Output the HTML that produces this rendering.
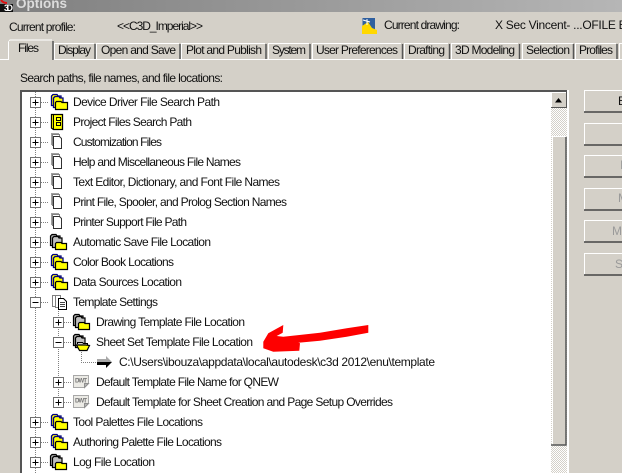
<!DOCTYPE html>
<html>
<head>
<meta charset="utf-8">
<title>Options</title>
<style>
html,body{margin:0;padding:0;width:622px;height:473px;overflow:hidden;background:#d4d0c8}
svg{display:block}
text{font-family:"Liberation Sans",sans-serif;font-size:12px;fill:#111}
</style>
</head>
<body>
<svg xmlns="http://www.w3.org/2000/svg" width="622" height="473" viewBox="0 0 622 473">
<defs>
<linearGradient id="tb" x1="0" x2="1" y1="0" y2="0">
<stop offset="0" stop-color="#7f7f7f"/><stop offset=".5" stop-color="#9a9a9a"/><stop offset="1" stop-color="#b6b6b6"/>
</linearGradient>
<pattern id="hatch" width="2" height="2" patternUnits="userSpaceOnUse">
<rect width="2" height="2" fill="#ffffff"/><rect width="1" height="1" fill="#d4d0c8"/><rect x="1" y="1" width="1" height="1" fill="#d4d0c8"/>
</pattern>
<symbol id="plus" width="12" height="12" overflow="visible">
<rect x=".5" y=".5" width="10" height="10" fill="#fff" stroke="#707070"/>
<path d="M2.500 5.500H8.500M5.500 2.500V8.500" stroke="#000" fill="none"/>
</symbol>
<symbol id="minus" width="12" height="12" overflow="visible">
<rect x=".5" y=".5" width="10" height="10" fill="#fff" stroke="#707070"/>
<path d="M2.500 5.500H8.500" stroke="#000" fill="none"/>
</symbol>
<symbol id="fy" width="18" height="17" overflow="visible">
<path d="M.5 11.500V2L2 .5H6L7 2H10V11.500Z" fill="#ffff00" stroke="#000080" stroke-width="1.300"/>
<path d="M2.500 13.500V4L4 2.500H8L9 4H12V13.500Z" fill="#ffff00" stroke="#000080" stroke-width="1.300"/>
<path d="M4.500 15.500V8.500L5.500 7.500H10L11 8.500H16.500V15.500Z" fill="#ffff00" stroke="#000" stroke-width="1.200"/>
</symbol>
<symbol id="fg" width="18" height="17" overflow="visible">
<path d="M.5 11.500V2L2 .5H6L7 2H10V11.500Z" fill="#a0a0a0" stroke="#000" stroke-width="1.200"/>
<path d="M2.500 13.500V4L4 2.500H8L9 4H12V13.500Z" fill="#c0c0c0" stroke="#000" stroke-width="1.200"/>
<path d="M5.500 15.500V9.500L6.500 8.500H11L12 9.500H16.500V15.500Z" fill="#ffff00" stroke="#000" stroke-width="1.200"/>
</symbol>
<symbol id="fo" width="18" height="17" overflow="visible">
<path d="M.5 11.500V2L2 .5H6L7 2H10V11.500Z" fill="#a0a0a0" stroke="#000" stroke-width="1.200"/>
<path d="M2.500 13.500V4L4 2.500H8L9 4H12V13.500Z" fill="#c0c0c0" stroke="#000" stroke-width="1.200"/>
<path d="M4.500 10V8.500H9.500L10.500 9.500H14.500V11" fill="#d4d0c8" stroke="#000"/>
<path d="M6.500 16.500L3.500 11H13L16.500 11.500L14 16.500Z" fill="#ffff00" stroke="#000" stroke-width="1.200"/>
</symbol>
<symbol id="doc" width="17" height="17" overflow="visible">
<path d="M1.500 .5H8.500V11.500H1.500Z" fill="#fff" stroke="#a0a0a0"/>
<path d="M2.500 1.500H9.500V12.500H2.500Z" fill="#fff" stroke="#808080"/>
<path d="M3.500 3.500H9.500L11.500 5.500V15.500H3.500Z" fill="#fff" stroke="#303030"/>
</symbol>
<symbol id="prj" width="17" height="17" overflow="visible">
<path d="M1.500 .5V14L3.500 15.500H12.500V.5Z" fill="#ffff00" stroke="#000" stroke-width="1.300"/>
<path d="M3.500 .5V15" stroke="#000" fill="none"/>
<rect x="6.500" y="3.500" width="4" height="3" fill="#ffff00" stroke="#000"/>
<rect x="6.500" y="8.500" width="4" height="3" fill="#ffff00" stroke="#000"/>
</symbol>
<symbol id="tpl" width="17" height="17" overflow="visible">
<path d="M1.500 1.500H7.500V12.500H1.500Z" fill="#fff" stroke="#808080"/>
<path d="M4.500 1.500H9.500V13.500H4.500Z" fill="#fff" stroke="#808080"/>
<path d="M7.500 4.500H12.500L15.500 7.500V15.500H7.500Z" fill="#fff" stroke="#000"/>
<path d="M9 8.500H14M9 10.500H14M9 12.500H14" stroke="#444" fill="none"/>
</symbol>
<symbol id="dwt" width="17" height="17" overflow="visible">
<path d="M.5 1.500H15.500V9.500L11.500 13.500H.5Z" fill="#ecebe6" stroke="#a8a8a8"/>
<path d="M11.500 13.500V9.500H15.500Z" fill="#b8b8b8" stroke="#909090"/>
<text x="2" y="8.500" style="font-size:6px;font-weight:bold;fill:#777" textLength="12">DWT</text>
</symbol>
</defs>

<!-- background and title bar -->
<rect width="622" height="473" fill="#d4d0c8"/>
<rect width="622" height="12" fill="url(#tb)"/>
<text x="16" y="8" style="font-size:13.500px;font-weight:bold;fill:#dcdcdc">Options</text>
<rect x="0" y="12" width="622" height="1" fill="#d4d0c8"/>
<rect x="0" y="4" width="13" height="8" fill="#111"/>
<path d="M1 0Q3 3 7 3" stroke="#e01010" stroke-width="2" fill="none"/>
<text x="4" y="11" style="font-size:9px;font-weight:bold;fill:#fff" textLength="9">3D</text>

<!-- header row -->
<text x="9" y="31" textLength="67">Current profile:</text>
<text x="117" y="30" textLength="86">&lt;&lt;C3D_Imperial&gt;&gt;</text>
<path d="M362.500 18H375V30H362.500Z" fill="#2f5f9f"/>
<path d="M362 34V26L368 22L372 28L377 30V34Z" fill="#ffd800"/>
<path d="M363 20L370 22M367 19V25" stroke="#fff" fill="none"/>
<text x="384" y="29" textLength="76">Current drawing:</text>
<text x="495" y="29" textLength="140">X Sec Vincent- ...OFILE ED</text>

<!-- tab strip -->
<path d="M0 59.500H8M53 59.500H622" stroke="#fff" fill="none"/>
<g fill="#d4d0c8" stroke="#fff">
<path d="M54.500 59V43.500H94"/>
<path d="M96.500 59V43.500H179"/>
<path d="M181.500 59V43.500H265"/>
<path d="M268.500 59V43.500H309"/>
<path d="M312.500 59V43.500H401"/>
<path d="M404.500 59V43.500H448"/>
<path d="M451.500 59V43.500H518"/>
<path d="M522.500 59V43.500H573"/>
<path d="M575.500 59V43.500H616"/>
<path d="M619.500 59V43.500H622"/>
</g>
<path d="M95 44V59M180 44V59M266 44V59M310 44V59M402.500 44V59M449.500 44V59M519.500 44V59M573.500 44V59M617 44V59" stroke="#555" stroke-width="1.500" fill="none"/>
<path d="M8.500 60V42L10 40H52" fill="#d4d0c8" stroke="#fff"/>
<path d="M53 41V60" stroke="#555" stroke-width="1.500" fill="none"/>
<rect x="9" y="41" width="43" height="20" fill="#d4d0c8"/>
<text x="18" y="52" textLength="21">Files</text>
<text x="58" y="54" textLength="33">Display</text>
<text x="101" y="54" textLength="75">Open and Save</text>
<text x="186" y="54" textLength="76">Plot and Publish</text>
<text x="272" y="54" textLength="34">System</text>
<text x="316" y="54" textLength="82">User Preferences</text>
<text x="408" y="54" textLength="37">Drafting</text>
<text x="455" y="54" textLength="60">3D Modeling</text>
<text x="526" y="54" textLength="44">Selection</text>
<text x="579" y="54" textLength="34">Profiles</text>

<text x="20" y="82" textLength="203">Search paths, file names, and file locations:</text>

<!-- tree panel -->
<rect x="20" y="90" width="549" height="383" fill="#fff"/>
<path d="M21 473V91H567" stroke="#555" stroke-width="2" fill="none"/>
<path d="M568.500 90V473" stroke="#fff" fill="none"/>

<!-- scrollbar -->
<rect x="551" y="92" width="16" height="381" fill="url(#hatch)"/>
<rect x="551" y="92" width="15" height="15" fill="#d4d0c8"/>
<path d="M551.500 107V92.500H566" stroke="#fff" fill="none"/>
<path d="M551 107.500H566.500V92" stroke="#555" fill="none"/>
<path d="M555 102.500L558.500 98L562 102.500Z" fill="#000"/>
<rect x="552" y="136" width="14" height="309" fill="#d4d0c8"/>
<path d="M552.500 445V136.500H566" stroke="#fff" fill="none"/>
<path d="M551 445H566V137" stroke="#555" stroke-width="1.500" fill="none"/>

<!-- side buttons -->
<g fill="#d4d0c8">
<rect x="584" y="90" width="38" height="22"/>
<rect x="584" y="123" width="38" height="22"/>
</g>
<path d="M584.500 112V90.500H622M584.500 145V123.500H622M584.500 177V155.500H622M584.500 210V188.500H622M584.500 242V220.500H622M584.500 275V253.500H622" stroke="#fff" fill="none"/>
<path d="M584 112H622M584 145H622M584 177H622M584 210H622M584 242H622M584 275H622" stroke="#444" stroke-width="1.500" fill="none"/>
<text x="618" y="105" style="fill:#111">B</text>
<text x="620" y="169" style="fill:#9a9a9a">I</text>
<text x="618" y="202" style="fill:#9a9a9a">M</text>
<text x="612" y="235" style="fill:#9a9a9a">Mo</text>
<text x="615" y="268" style="fill:#9a9a9a">S</text>

<!-- tree lines -->
<g stroke="#808080" stroke-dasharray="1 1" fill="none">
<path d="M35.500 92V473"/>
<path d="M58.500 311V401"/>
<path d="M41 102.500H49M41 122.500H49M41 142.500H49M41 162.500H49M41 182.500H49M41 202.500H49M41 222.500H49M41 242.500H49M41 262.500H49M41 282.500H49M41 302.500H49M41 422.500H49M41 442.500H49M41 462.500H49"/>
<path d="M64 322.500H72M64 342.500H72M64 382.500H72M64 402.500H72"/>
<path d="M81.500 352V362.500H96"/>
</g>

<!-- expanders -->
<use href="#plus" x="30" y="97"/><use href="#plus" x="30" y="117"/><use href="#plus" x="30" y="137"/>
<use href="#plus" x="30" y="157"/><use href="#plus" x="30" y="177"/><use href="#plus" x="30" y="197"/>
<use href="#plus" x="30" y="217"/><use href="#plus" x="30" y="237"/><use href="#plus" x="30" y="257"/>
<use href="#plus" x="30" y="277"/><use href="#minus" x="30" y="297"/>
<use href="#plus" x="53" y="317"/><use href="#minus" x="53" y="337"/>
<use href="#plus" x="53" y="377"/><use href="#plus" x="53" y="397"/>
<use href="#plus" x="30" y="417"/><use href="#plus" x="30" y="437"/><use href="#plus" x="30" y="457"/>

<!-- icons -->
<use href="#fy" x="51" y="94"/><use href="#prj" x="50" y="114"/>
<use href="#doc" x="50" y="133"/><use href="#doc" x="50" y="153"/><use href="#doc" x="50" y="173"/>
<use href="#doc" x="50" y="193"/><use href="#doc" x="50" y="213"/>
<use href="#fg" x="50" y="234"/><use href="#fy" x="51" y="254"/><use href="#fy" x="51" y="274"/>
<use href="#tpl" x="51" y="294"/>
<use href="#fg" x="73" y="314"/><use href="#fo" x="73" y="334"/>
<use href="#dwt" x="73" y="374"/><use href="#dwt" x="73" y="394"/>
<use href="#fy" x="51" y="414"/><use href="#fy" x="51" y="434"/><use href="#fg" x="50" y="454"/>
<path d="M97 359H106V356L112 362H97Z" fill="#a8a8a8"/>
<path d="M97 362H112L106 368V365H97Z" fill="#000"/>

<!-- labels -->
<g transform="translate(0,1)">
<text x="73" y="105" textLength="147">Device Driver File Search Path</text>
<text x="73" y="125" textLength="119">Project Files Search Path</text>
<text x="73" y="145" textLength="89">Customization Files</text>
<text x="73" y="165" textLength="168">Help and Miscellaneous File Names</text>
<text x="73" y="185" textLength="207">Text Editor, Dictionary, and Font File Names</text>
<text x="73" y="205" textLength="214">Print File, Spooler, and Prolog Section Names</text>
<text x="73" y="225" textLength="114">Printer Support File Path</text>
<text x="73" y="245" textLength="138">Automatic Save File Location</text>
<text x="73" y="265" textLength="101">Color Book Locations</text>
<text x="73" y="285" textLength="109">Data Sources Location</text>
<text x="73" y="305" textLength="85">Template Settings</text>
<text x="96" y="325" textLength="149">Drawing Template File Location</text>
<text x="96" y="345" textLength="157">Sheet Set Template File Location</text>
<text x="119" y="365" textLength="316">C:\Users\ibouza\appdata\local\autodesk\c3d 2012\enu\template</text>
<text x="96" y="385" textLength="183">Default Template File Name for QNEW</text>
<text x="96" y="405" textLength="297">Default Template for Sheet Creation and Page Setup Overrides</text>
<text x="73" y="425" textLength="130">Tool Palettes File Locations</text>
<text x="73" y="445" textLength="149">Authoring Palette File Locations</text>
<text x="73" y="465" textLength="82">Log File Location</text>
</g>

<!-- red hand-drawn arrow -->
<path d="M368.300 325L368.300 332.700L346.700 336.700L320 340.700L298.300 342.700L300 343.300L299.300 350.700L273.300 351.700L263.300 348.300L263.300 341.700L268.300 333.300L283.300 325L282.700 332.700L276.700 336L283.300 336.700L320 332.700L346.700 328.300Z" fill="#fe0000"/>
</svg>
</body>
</html>
